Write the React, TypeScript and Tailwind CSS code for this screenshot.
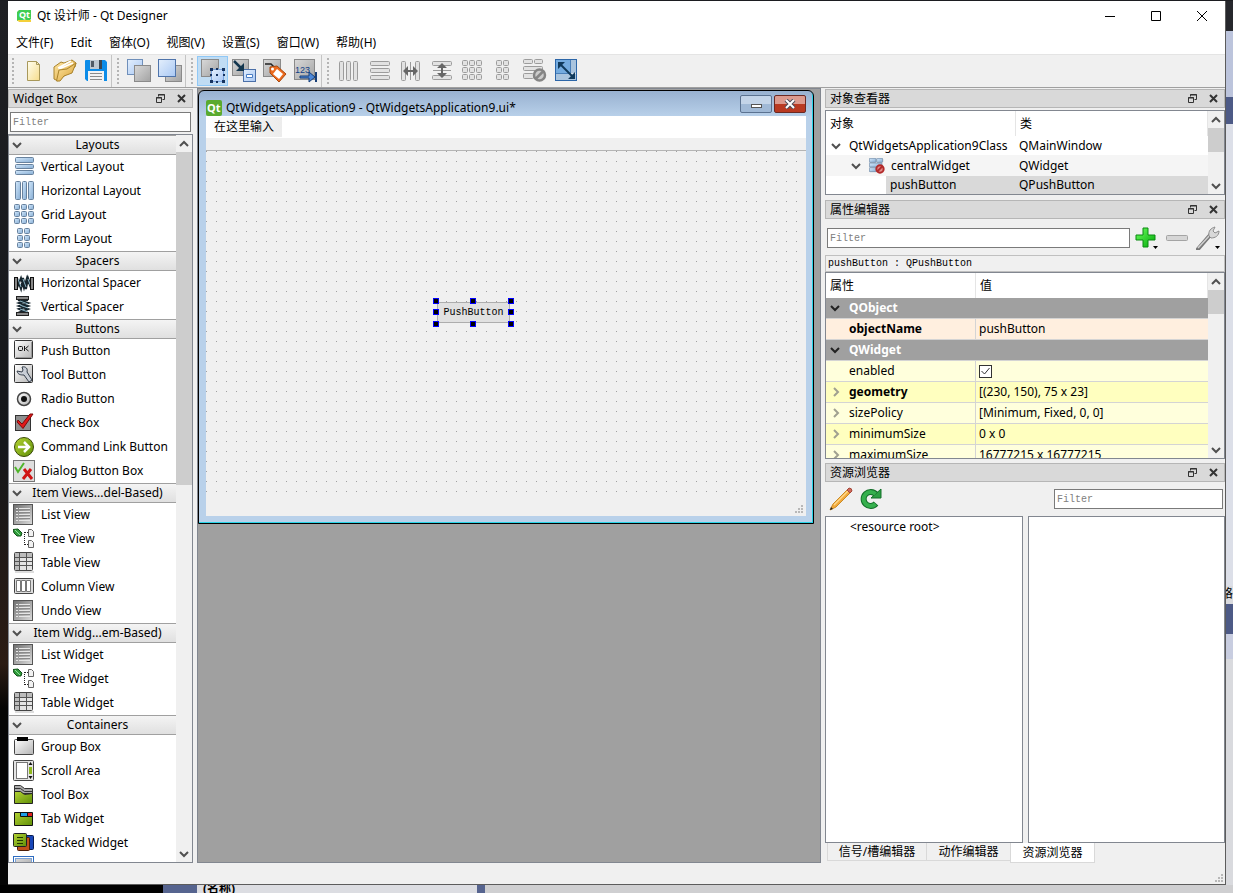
import { ReactNode } from "react";

const uiFont = "font-['Noto_Sans','Noto_Sans_CJK_SC',sans-serif]";
const monoFont = "font-['Liberation_Mono','Noto_Sans_CJK_SC',monospace]";

function Icon({ children, size = 24 }: { children: ReactNode; size?: number }) {
    return (
        <svg width={size} height={size} viewBox="0 0 24 24" fill="none" className="shrink-0" aria-hidden="true">
            {children}
        </svg>
    );
}

// Gradients shared by all the icons
function Gradients() {
    const ramps = [
        { id: "blue", from: "#d3e8fb", to: "#86add4" },
        { id: "sky", from: "#e4effc", to: "#a9c8f4" },
        { id: "gray", from: "#d9d9d9", to: "#a2a2a2" },
        { id: "light", from: "#ffffff", to: "#b4b4b4" },
        { id: "folder", from: "#ffe9a8", to: "#d9a032" },
        { id: "paper", from: "#fffef0", to: "#f6dd8c" },
        { id: "green", from: "#b5d334", to: "#5f8f08" },
        { id: "lime", from: "#6dff5f", to: "#00a808" },
        { id: "list", from: "#6e6e6e", to: "#dcdcdc" },
    ];
    return (
        <svg width="0" height="0" className="absolute" aria-hidden="true">
            <defs>
                {ramps.map((r) => (
                    <linearGradient key={r.id} id={r.id} x1="0" y1="0" x2="1" y2="1">
                        <stop offset="0" stopColor={r.from} />
                        <stop offset="1" stopColor={r.to} />
                    </linearGradient>
                ))}
            </defs>
        </svg>
    );
}

function Bars({ rects, fill, stroke }: { rects: number[][]; fill: string; stroke: string }) {
    return (
        <>
            {rects.map(([x, y, w, h]) => (
                <rect key={`${x}-${y}`} x={x + 0.5} y={y + 0.5} width={w - 1} height={h - 1} rx="1" fill={fill} stroke={stroke} />
            ))}
        </>
    );
}

const hRects = [[2, 2, 19, 6], [2, 9, 19, 5], [2, 15, 19, 5]];
const vRects = [[2, 2, 6, 19], [9, 2, 5, 19], [15, 2, 6, 19]];
const gridRects = [2, 9, 16].flatMap((y) => [1, 8, 15].map((x) => [x, y - 1, 6, 6]));
const formRects = [2, 9, 16].flatMap((y) => [4, 11].map((x) => [x, y - 1, 6, 6]));

const blue = { fill: "url(#blue)", stroke: "#68829e" };
const gray = { fill: "#e2e2e2", stroke: "#9c9c9c" };

const ListIcon = () => (
    <Icon>
        <rect x="0.5" y="1.5" width="19" height="20" fill="url(#list)" stroke="#555" />
        <path d="M3 5.5h2M3 8.5h2M3 11.5h2M3 14.5h2M3 17.5h2M6 5.5h11M6 8.5h11M6 11.5h11M6 14.5h11M6 17.5h11" stroke="#e6e6e6" />
        <path d="M6 6.5h11M6 9.5h11M6 12.5h11M6 15.5h11" stroke="#8b8b8b" />
    </Icon>
);

const TreeIcon = () => (
    <Icon>
        <path d="M0 2.5L5 2l4 4-1 3-4 0-3-3z" fill="#2f9b3a" stroke="#12501a" />
        <path d="M2 3l5 5" stroke="#8ee29a" />
        <path d="M11.5 5v14M12 5.5h4M12 17.5h4" stroke="#222" strokeDasharray="1 1" />
        <path d="M15.500 2.500h3l2 2v5h-5zM15.500 13.500h3l2 2v5h-5z" fill="#f2f2f2" stroke="#666" />
    </Icon>
);

const TableIcon = () => (
    <Icon>
        <rect x="1.5" y="1.5" width="18" height="18" rx="1" fill="#e4e4e4" stroke="#444" />
        <path d="M2 2h17v4H2zM2 2h4v17H2z" fill="#bcbcbc" />
        <path d="M2 6.5h17M2 10.5h17M2 14.5h17M6.5 2v17M13.5 2v17" stroke="#555" />
        <path d="M2 21h19" stroke="#bbb" />
    </Icon>
);

const TinyCaret = () => <path d="M19 20h5l-2.5 3z" fill="#000" />;

const sections: { title: string; items: [string, ReactNode][] }[] = [
    {
        title: "Layouts",
        items: [
            ["Vertical Layout", <Icon><Bars rects={hRects} {...blue} /></Icon>],
            ["Horizontal Layout", <Icon><Bars rects={vRects} {...blue} /></Icon>],
            ["Grid Layout", <Icon><Bars rects={gridRects} {...blue} /></Icon>],
            ["Form Layout", <Icon><Bars rects={formRects} {...blue} /></Icon>],
        ],
    },
    {
        title: "Spacers",
        items: [
            [
                "Horizontal Spacer",
                <Icon>
                    <path d="M4 7l4 11 2-11 3 11 2-11 4 11M4 17l4-10 3 10 3-10 4 10" stroke="#15252e" strokeWidth="2" />
                    <path d="M5 8l3 8M10 8l3 8M15 8l3 8" stroke="#8ab3c4" />
                    <rect x="1.5" y="6.5" width="3" height="12" fill="#888" stroke="#111" />
                    <rect x="17.5" y="6.5" width="3" height="12" fill="#888" stroke="#111" />
                </Icon>,
            ],
            [
                "Vertical Spacer",
                <Icon>
                    <path d="M5 5l10 3-9 3 9 3-10 4M15 5L6 8l9 3-9 3 9 4" stroke="#15252e" strokeWidth="2" />
                    <path d="M7 6l8 3M7 10l8 3M7 14l8 3" stroke="#8ab3c4" />
                    <rect x="3.5" y="1.5" width="12" height="3" fill="#888" stroke="#222" />
                    <rect x="3.5" y="17.5" width="12" height="3" fill="#888" stroke="#222" />
                </Icon>,
            ],
        ],
    },
    {
        title: "Buttons",
        items: [
            [
                "Push Button",
                <Icon>
                    <rect x="1.5" y="1.5" width="18" height="18" rx="1" fill="url(#light)" stroke="#333" />
                    <path d="M3 18.5h16M18.5 3v16" stroke="#999" />
                    <rect x="5.5" y="7.5" width="4" height="4" rx="1" stroke="#111" />
                    <path d="M11.500 7v5M15.500 7l-3 2.500 3 2.500" stroke="#111" />
                </Icon>,
            ],
            [
                "Tool Button",
                <Icon>
                    <rect x="1.5" y="1.5" width="18" height="18" rx="1" fill="url(#light)" stroke="#333" />
                    <path d="M9 4c4-1 6 2 5 5l5 8-3 2-5-7c-3 0-6 0-7-4l5 1 1-2z" fill="#c9ced6" stroke="#333d4a" />
                </Icon>,
            ],
            [
                "Radio Button",
                <Icon>
                    <circle cx="11" cy="12" r="6.5" fill="url(#light)" stroke="#444" strokeWidth="1.5" />
                    <circle cx="11" cy="12" r="3" fill="#111" />
                </Icon>,
            ],
            [
                "Check Box",
                <Icon>
                    <rect x="2.5" y="4.5" width="15" height="15" fill="#8f8f8f" stroke="#333" />
                    <path d="M5 9l4 4 8-10 3 0L10 17.5 4 11z" fill="#e01818" stroke="#7c0808" />
                </Icon>,
            ],
            [
                "Command Link Button",
                <Icon>
                    <circle cx="11" cy="12" r="9.5" fill="url(#green)" stroke="#3a4a08" />
                    <path d="M5 12h10M11 7l5 5-5 5" stroke="#fff" strokeWidth="2.5" />
                </Icon>,
            ],
            [
                "Dialog Button Box",
                <Icon>
                    <rect x="0.5" y="1.5" width="21" height="21" fill="#dedede" stroke="#777" />
                    <path d="M2 8l3 5 6-9" stroke="#4fb52a" strokeWidth="2" />
                    <path d="M11 10l8 10M18 10l-8 10" stroke="#d01414" strokeWidth="3" />
                </Icon>,
            ],
        ],
    },
    {
        title: "Item Views...del-Based)",
        items: [
            ["List View", <ListIcon />],
            ["Tree View", <TreeIcon />],
            ["Table View", <TableIcon />],
            [
                "Column View",
                <Icon>
                    <rect x="1.5" y="3.5" width="19" height="15" rx="1" fill="#ddd" stroke="#444" />
                    <path d="M3.500 5.500h4v11h-4zM8.500 5.500h4v11h-4zM13.500 5.500h4v11h-4z" fill="#fff" stroke="#777" />
                </Icon>,
            ],
            ["Undo View", <ListIcon />],
        ],
    },
    {
        title: "Item Widg...em-Based)",
        items: [
            ["List Widget", <ListIcon />],
            ["Tree Widget", <TreeIcon />],
            ["Table Widget", <TableIcon />],
        ],
    },
    {
        title: "Containers",
        items: [
            [
                "Group Box",
                <Icon>
                    <rect x="1.5" y="4.5" width="19" height="15" rx="1" fill="url(#light)" stroke="#444" />
                    <path d="M4 2h11v4H4z" fill="#000" />
                </Icon>,
            ],
            [
                "Scroll Area",
                <Icon>
                    <rect x="0.5" y="1.5" width="20" height="20" rx="1" fill="#e4e4e4" stroke="#444" />
                    <rect x="3.5" y="3.5" width="11" height="16" fill="#fff" stroke="#777" />
                    <path d="M16 8h3v7h-3z" fill="#8fb81c" />
                    <path d="M15.5 6l2-3 2 3zM15.5 17l2 3 2-3z" fill="#111" />
                </Icon>,
            ],
            [
                "Tool Box",
                <Icon>
                    <path d="M1.500 2.500h6l4 3h8v5h-18z" fill="#aaa" stroke="#333" />
                    <path d="M1.500 5.500h6l4 3h8" stroke="#333" />
                    <path d="M1.500 8.500h6l4 3 8-1v10h-18z" fill="url(#green)" stroke="#222" />
                </Icon>,
            ],
            [
                "Tab Widget",
                <Icon>
                    <path d="M1.500 5.500h18v13h-18z" fill="url(#green)" stroke="#111" />
                    <path d="M8 6h6v3H8z" fill="#1fa0e8" />
                    <path d="M15 6h4v3h-4z" fill="#e02020" />
                    <path d="M7.500 5v4.500H20M14.500 5v4" stroke="#111" />
                </Icon>,
            ],
            [
                "Stacked Widget",
                <Icon>
                    <rect x="8.5" y="4.5" width="12" height="14" rx="1" fill="#1746b8" stroke="#071b4f" />
                    <rect x="4.5" y="6.5" width="12" height="13" rx="1" fill="#c0501a" stroke="#4c1c05" />
                    <rect x="0.5" y="2.5" width="13" height="13" rx="1" fill="url(#green)" stroke="#222" />
                    <path d="M4 6.5h6M4 9.5h6M4 12.5h6" stroke="#233800" />
                </Icon>,
            ],
            [
                "Frame",
                <Icon>
                    <rect x="0.5" y="1.5" width="20" height="18" fill="#fff" stroke="#2e6cc0" />
                    <rect x="2.5" y="3.5" width="16" height="14" fill="url(#gray)" stroke="#7ba2d6" />
                </Icon>,
            ],
        ],
    },
];

const Tile = ({ x, y, s = 15, fill = "url(#gray)", stroke = "#8a8a8a" }: { x: number; y: number; s?: number; fill?: string; stroke?: string }) => (
    <rect x={x + 0.5} y={y + 0.5} width={s} height={s} fill={fill} stroke={stroke} />
);

const toolGroups: { label: string; icon: ReactNode; active?: boolean }[][] = [
    [
        {
            label: "New",
            icon: <Icon><path d="M5.500 2.500h9l3 3v16h-12z" fill="url(#paper)" stroke="#a8985a" /><path d="M14.500 2.500v3h3" stroke="#a8985a" /></Icon>,
        },
        {
            label: "Open",
            icon: (
                <Icon>
                    <path d="M1 8l7-5 3 1 8-3 4 3-1 4-17 14-4-2z" fill="url(#folder)" stroke="#a9832c" />
                    <path d="M5 9L18 2M6 10L20 4" stroke="#fff" strokeWidth="1.5" />
                    <path d="M3.500 22L6 11l8-1 9-6-4 10-8 3-4 5z" fill="url(#folder)" stroke="#a9832c" />
                </Icon>
            ),
        },
        {
            label: "Save",
            icon: (
                <Icon>
                    <path d="M1 2q0-1 1-1h19l2 2v19H3l-2-2z" fill="#0c8ce8" />
                    <rect x="6" y="1" width="12" height="9" fill="#3c4650" />
                    <rect x="6" y="1" width="9" height="9" fill="#bfc8d0" />
                    <path d="M7 2h3v6H7z" fill="#505a64" />
                    <rect x="4" y="12" width="16" height="10" fill="#f2f2f2" />
                    <path d="M6 14.5h12M6 17.5h12M6 20.5h12" stroke="#8a8a8a" />
                </Icon>
            ),
        },
    ],
    [
        { label: "Send to Back", icon: <Icon><Tile x={0} y={0} fill="url(#sky)" stroke="#6f8fba" /><Tile x={7} y={6} s={16} /></Icon> },
        { label: "Bring to Front", icon: <Icon><Tile x={7} y={6} s={16} /><Tile x={0} y={0} s={17} fill="url(#sky)" stroke="#4f74ab" /></Icon> },
    ],
    [
        {
            label: "Edit Widgets",
            active: true,
            icon: (
                <Icon>
                    <Tile x={0} y={0} s={17} />
                    <Tile x={10} y={10} s={12} fill="url(#sky)" stroke="#7ba5e0" />
                    <path d="M9 9h3v3H9zM15 9h2v2h-2zM21 9h3v3h-3zM9 15h2v2H9zM22 15h2v2h-2zM9 21h3v3H9zM15 22h2v2h-2zM21 21h3v3h-3zM15 15h2v2h-2z" fill="#16335f" />
                </Icon>
            ),
        },
        {
            label: "Edit Signals/Slots",
            icon: (
                <Icon>
                    <Tile x={0} y={0} s={16} />
                    <Tile x={11} y={10} s={12} fill="url(#sky)" stroke="#4a6fa8" />
                    <path d="M14.500 15.500h6v3h-6z" fill="#fff" stroke="#4a7dc4" />
                    <path d="M2 2l9 9" stroke="#14374f" strokeWidth="2.5" />
                    <path d="M12 4v8H4z" fill="#14374f" />
                </Icon>
            ),
        },
        {
            label: "Edit Buddies",
            icon: (
                <Icon>
                    <Tile x={0} y={0} s={17} />
                    <path d="M2 5h6l4 4" stroke="#222" strokeWidth="1.5" />
                    <path d="M7 8l7-1 9 8-7 8-9-9z" fill="#ec6a1e" stroke="#a8480e" />
                    <path d="M14 10l6 5-4 5-6-5z" fill="#fff" />
                    <circle cx="9.5" cy="10" r="1.5" fill="#fff" />
                </Icon>
            ),
        },
        {
            label: "Edit Tab Order",
            icon: (
                <Icon>
                    <Tile x={0} y={0} s={20} />
                    <text x="1" y="14" fontSize="9" fill="#123f86" fontFamily="Liberation Sans">123</text>
                    <path d="M6 17h9v-4l6 5-6 5v-4H6z" fill="#4d88d8" stroke="#173f78" />
                    <path d="M22 13v10" stroke="#173f78" strokeWidth="2" />
                </Icon>
            ),
        },
    ],
    [
        { label: "Lay Out Horizontally", icon: <Icon><Bars rects={[[2, 2, 5, 20], [9, 2, 5, 20], [16, 2, 5, 20]]} {...gray} /></Icon> },
        { label: "Lay Out Vertically", icon: <Icon><Bars rects={[[2, 2, 20, 5], [2, 9, 20, 5], [2, 16, 20, 5]]} {...gray} /></Icon> },
        {
            label: "Lay Out Horizontally in Splitter",
            icon: (
                <Icon>
                    <Bars rects={[[2, 2, 5, 20], [16, 2, 5, 20]]} {...gray} />
                    <path d="M11.5 3v18" stroke="#999" />
                    <path d="M4 12l5-5v4h5V7l5 5-5 5v-4H9v4z" fill="#666" />
                </Icon>
            ),
        },
        {
            label: "Lay Out Vertically in Splitter",
            icon: (
                <Icon>
                    <Bars rects={[[2, 2, 20, 5], [2, 16, 20, 5]]} {...gray} />
                    <path d="M3 11.5h18" stroke="#999" />
                    <path d="M12 4l5 5h-4v5h4l-5 5-5-5h4V9H7z" fill="#666" />
                </Icon>
            ),
        },
        { label: "Lay Out in a Grid", icon: <Icon><Bars rects={gridRects} {...gray} /></Icon> },
        { label: "Lay Out in a Form Layout", icon: <Icon><Bars rects={formRects} {...gray} /></Icon> },
        {
            label: "Break Layout",
            icon: (
                <Icon>
                    <Bars rects={[[0, 0, 10, 5], [11, 0, 9, 5], [0, 7, 20, 5], [0, 14, 11, 6]]} {...gray} />
                    <circle cx="16.5" cy="16" r="5.5" fill="#ccc" stroke="#858585" strokeWidth="2.5" />
                    <path d="M12.5 20l8-8" stroke="#858585" strokeWidth="2.5" />
                </Icon>
            ),
        },
        {
            label: "Adjust Size",
            icon: (
                <Icon>
                    <rect x="1.5" y="0.5" width="21" height="21" fill="#dbe6f1" stroke="#2c66a8" />
                    <path d="M2 1h14v13H2z" fill="#74abdf" />
                    <path d="M16.5 1v13M2 14.5h15" stroke="#4a7fb8" />
                    <path d="M17 1h5v13h-5zM2 15h20v6H2z" fill="#a9c4de" />
                    <path d="M7 6l11 11" stroke="#103a5c" strokeWidth="2" />
                    <path d="M4 3h7l-7 7zM21 20v-7l-7 7z" fill="#103a5c" />
                </Icon>
            ),
        },
    ],
];

function Chevron({ dir = "down", color = "#505050" }: { dir?: "down" | "up" | "right"; color?: string }) {
    const d = { down: "M1 3l4 4 4-4", up: "M1 7l4-4 4 4", right: "M3 1l4 4-4 4" }[dir];
    return (
        <svg width="10" height="10" viewBox="0 0 10 10" fill="none" className="shrink-0" aria-hidden="true">
            <path d={d} stroke={color} strokeWidth="2" />
        </svg>
    );
}

function ScrollBar({ thumb }: { thumb: string }) {
    return (
        <div className="flex w-4 shrink-0 flex-col items-center bg-[#f0f0f0]">
            <button aria-label="Scroll up" className="flex h-[17px] w-full items-center justify-center"><Chevron dir="up" /></button>
            <div className="min-h-0 w-full flex-1">
                <div className={`w-full bg-[#cdcdcd] ${thumb}`} />
            </div>
            <button aria-label="Scroll down" className="flex h-[17px] w-full items-center justify-center"><Chevron /></button>
        </div>
    );
}

function DockTitle({ title }: { title: string }) {
    return (
        <div className="flex h-[19px] shrink-0 items-center border border-[#b6b6b6] bg-[#d9d9d9] pl-1">
            <h2 className="flex-1 leading-4">{title}</h2>
            <button aria-label={`Float ${title}`} className="flex h-4 w-5 items-center justify-center">
                <svg width="9" height="9" viewBox="0 0 9 9" fill="none" stroke="#333">
                    <path d="M2.500 2.500v-2h6v5h-2" />
                    <path d="M0.500 3.500h5v5h-5zM0 4h6M2 1h7" />
                </svg>
            </button>
            <button aria-label={`Close ${title}`} className="flex h-4 w-[22px] items-center justify-center">
                <svg width="9" height="9" viewBox="0 0 9 9" fill="none" stroke="#333" strokeWidth="2">
                    <path d="M1 1l7 7M8 1L1 8" />
                </svg>
            </button>
        </div>
    );
}

function FilterInput({ label, className }: { label: string; className: string }) {
    return (
        <input
            type="text"
            aria-label={label}
            placeholder="Filter"
            className={`h-5 border border-[#7a7a7a] bg-white px-0.5 text-[10px] outline-none placeholder:text-[#808080] ${monoFont} ${className}`}
        />
    );
}

function SizeGrip() {
    return (
        <svg width="8" height="8" viewBox="0 0 8 8" fill="#b8b8b8" aria-hidden="true">
            <path d="M6 0h2v2H6zM3 3h2v2H3zM6 3h2v2H6zM0 6h2v2H0zM3 6h2v2H3zM6 6h2v2H6z" />
        </svg>
    );
}

function TitleBar() {
    return (
        <header className="flex h-[30px] shrink-0 items-center bg-white pl-2">
            <svg width="16" height="14" viewBox="0 0 16 14" aria-hidden="true">
                <path d="M3 1h12v9l-2 2H1V3z" fill="#41cd52" />
                <path d="M1 11h14v2H3z" fill="#f4d03a" />
                <text x="3" y="9" fontSize="9" fontWeight="700" fill="#fff" fontFamily="Noto Sans">Qt</text>
            </svg>
            <h1 className="flex-1 pl-[5px]">Qt 设计师 - Qt Designer</h1>
            {[
                ["Minimize", "M0 5.5h10"],
                ["Maximize", "M0.5 0.5h9v9h-9z"],
                ["Close", "M0 0l10 10M10 0L0 10"],
            ].map(([label, d]) => (
                <button key={label} aria-label={label} className="flex h-full w-[46px] items-center justify-center">
                    <svg width="10" height="10" viewBox="0 0 10 10" fill="none" stroke="#000"><path d={d} /></svg>
                </button>
            ))}
        </header>
    );
}

function MenuBar() {
    const menus = ["文件(F)", "Edit", "窗体(O)", "视图(V)", "设置(S)", "窗口(W)", "帮助(H)"];
    return (
        <nav className="flex h-[23px] shrink-0 items-center gap-px bg-white">
            {menus.map((m) => (
                <button key={m} className="px-2 leading-5">{m}</button>
            ))}
        </nav>
    );
}

function ToolBar() {
    return (
        <div role="toolbar" className="flex h-[34px] shrink-0 border-t border-b border-t-[#e4e4e4] border-b-[#a0a0a0] bg-[#f0f0f0]">
            {toolGroups.map((group, i) => (
                <div key={i} className={`flex items-center ${i < toolGroups.length - 1 ? "border-r border-[#c4c4c4]" : ""}`}>
                    <div className={`flex justify-center ${i === 0 ? "w-[10px]" : "w-[11px]"}`}>
                        <div className="h-[26px] w-0.5 bg-[linear-gradient(#b4b4b4_50%,transparent_50%)] bg-[length:2px_4px]" />
                    </div>
                    {group.map((tool) => (
                        <button
                            key={tool.label}
                            aria-label={tool.label}
                            className={`flex h-[30px] w-[31px] items-center justify-center border ${tool.active ? "border-[#90c8f6] bg-[#c0dcf3]" : "border-transparent"}`}
                        >
                            {tool.icon}
                        </button>
                    ))}
                </div>
            ))}
        </div>
    );
}

function WidgetBox() {
    return (
        <aside className="flex w-[185px] shrink-0 flex-col pt-px">
            <DockTitle title="Widget Box" />
            <FilterInput label="Filter widgets" className="mx-0.5 mt-1" />
            <div className="mt-0.5 flex min-h-0 flex-1 border border-[#828790] bg-white">
                <div className="min-h-0 flex-1 overflow-hidden">
                    {sections.map((section) => (
                        <section key={section.title}>
                            <button className="flex h-5 w-full items-center border-t border-b border-[#a0a0a0] bg-linear-to-b from-[#f4f4f4] to-[#e0e0e0] px-[3px]">
                                <Chevron />
                                <span className="flex-1 text-center whitespace-nowrap">{section.title}</span>
                            </button>
                            <ul>
                                {section.items.map(([name, icon]) => (
                                    <li key={name} className="flex h-6 items-center gap-1 pl-1 whitespace-nowrap">
                                        {icon}
                                        {name}
                                    </li>
                                ))}
                            </ul>
                        </section>
                    ))}
                </div>
                <ScrollBar thumb="h-[48%]" />
            </div>
        </aside>
    );
}

const handles = [
    "-left-[3px] -top-[3px]",
    "left-[34px] -top-[3px]",
    "left-[72px] -top-[3px]",
    "-left-[3px] top-[8px]",
    "left-[72px] top-[8px]",
    "-left-[3px] top-[20px]",
    "left-[34px] top-[20px]",
    "left-[72px] top-[20px]",
];

function FormWindow() {
    return (
        <div className="absolute top-px left-0 flex h-[434px] w-[616px] flex-col rounded-t-md border border-black bg-[#b9d1ea] bg-[linear-gradient(#98b1d0,#b9d1ea_26px)] pr-[7px] pb-[7px] pl-[7px] shadow-[inset_-1px_-1px_0_#28d4e8]">
            <div className="flex h-[25px] shrink-0 items-end gap-1">
                <svg width="16" height="16" viewBox="0 0 16 16" aria-hidden="true">
                    <rect width="16" height="16" rx="2" fill="#5aaa2e" />
                    <text x="1" y="12" fontSize="11" fontWeight="700" fill="#fff" fontFamily="Noto Sans">Qt</text>
                </svg>
                <span className="flex-1 leading-4">QtWidgetsApplication9 - QtWidgetsApplication9.ui*</span>
                <div className="flex gap-0.5 self-start pt-1">
                    <button aria-label="Minimize form" className="flex h-[18px] w-8 items-center justify-center rounded-xs border border-[#5b7290] bg-linear-to-b from-[#c3d4e8] from-50% to-[#a0b9d6] to-50%">
                        <span className="mt-1 h-1 w-[11px] border border-[#555] bg-white" />
                    </button>
                    <button aria-label="Close form" className="flex h-[18px] w-8 items-center justify-center rounded-xs border border-[#6b2a24] bg-linear-to-b from-[#dc9a8e] from-50% to-[#b93a22] to-50%">
                        <svg width="12" height="10" viewBox="0 0 12 10" fill="none">
                            <path d="M2 1l8 8M10 1L2 9" stroke="#4d4d5a" strokeWidth="4" />
                            <path d="M2 1l8 8M10 1L2 9" stroke="#fff" strokeWidth="2" />
                        </svg>
                    </button>
                </div>
            </div>
            <div className="flex min-h-0 flex-1 flex-col bg-[#f0f0f0]">
                <div className="flex h-[22px] shrink-0 items-center bg-white">
                    <button className="h-5 bg-linear-to-r from-white to-[#ececec] px-2 leading-5">在这里输入</button>
                </div>
                <div className="h-[13px] shrink-0 border-b border-[#b4b4b4]" />
                <div className="relative mr-[9px] h-[344px] shrink-0 bg-[conic-gradient(from_270deg_at_1px_1px,#a0a0a0_90deg,transparent_90deg)] bg-[length:10px_10px]">
                    <div className="absolute top-[150px] left-[230px]">
                        <button className={`m-px h-[21px] w-[73px] border border-[#adadad] bg-[#e1e1e1] text-[10px] ${monoFont}`}>PushButton</button>
                        {handles.map((pos) => (
                            <span key={pos} className={`absolute size-1.5 border border-[#0000ff] bg-black ${pos}`} />
                        ))}
                    </div>
                </div>
                <div className="flex flex-1 items-end justify-end p-[3px]"><SizeGrip /></div>
            </div>
        </div>
    );
}

function ObjectInspector() {
    return (
        <section className="flex flex-col">
            <DockTitle title="对象查看器" />
            <div className="mt-0.5 flex h-[85px] border border-[#828790] bg-white">
                <div className="min-w-0 flex-1 overflow-hidden">
                    <table className="w-full table-fixed border-separate border-spacing-0 text-left whitespace-nowrap">
                        <colgroup><col className="w-[190px]" /><col /></colgroup>
                        <thead>
                            <tr className="h-[25px]">
                                <th className="border-r border-[#e5e5e5] p-0 pl-1 font-normal">对象</th>
                                <th className="border-r border-[#e5e5e5] p-0 pl-1 font-normal">类</th>
                            </tr>
                        </thead>
                        <tbody>
                            <tr className="h-[19px] leading-4">
                                <td className="p-0"><div className="flex items-center gap-2 pl-[5px]"><Chevron />QtWidgetsApplication9Class</div></td>
                                <td className="p-0 pl-[3px]">QMainWindow</td>
                            </tr>
                            <tr className="h-[21px] bg-[#f5f5f5] leading-4">
                                <td className="p-0">
                                    <div className="flex items-center gap-2 pl-[25px]">
                                        <Chevron />
                                        <div className="flex items-center gap-1.5">
                                            <Icon size={16}>
                                                <Bars rects={[[0, 0, 11, 7], [11, 0, 10, 7], [0, 7, 20, 7], [0, 14, 12, 7]]} {...blue} />
                                                <circle cx="16.5" cy="16.5" r="5.5" fill="#e28a8a" stroke="#b32a2a" strokeWidth="3" />
                                                <path d="M12.5 20l8-8" stroke="#b32a2a" strokeWidth="3" />
                                            </Icon>
                                            centralWidget
                                        </div>
                                    </div>
                                </td>
                                <td className="p-0 pl-[3px]">QWidget</td>
                            </tr>
                            <tr className="h-[18px] leading-[18px]">
                                <td className="p-0 pl-[60px]"><div className="bg-[#d9d9d9] pl-1">pushButton</div></td>
                                <td className="bg-[#d9d9d9] p-0 pl-[3px]">QPushButton</td>
                            </tr>
                        </tbody>
                    </table>
                </div>
                <ScrollBar thumb="h-6" />
            </div>
        </section>
    );
}

const properties: { name: string; value: string; bg: string; bold?: boolean }[] = [
    { name: "geometry", value: "[(230, 150), 75 x 23]", bg: "bg-[#ffffbf]", bold: true },
    { name: "sizePolicy", value: "[Minimum, Fixed, 0, 0]", bg: "bg-[#ffffdc]" },
    { name: "minimumSize", value: "0 x 0", bg: "bg-[#ffffbf]" },
    { name: "maximumSize", value: "16777215 x 16777215", bg: "bg-[#ffffdc]" },
];

function GroupRow({ name }: { name: string }) {
    return (
        <tr className="h-[21px] bg-[#a0a0a0] font-bold text-white">
            <td colSpan={2} className="border-b border-[#d4d4d4] p-0">
                <div className="flex items-center gap-2 pl-1"><Chevron color="#222" /><span className="pl-px">{name}</span></div>
            </td>
        </tr>
    );
}

function PropertyEditor() {
    const cell = "border-b border-[#d4d4d4] p-0";
    return (
        <section className="mt-[5px] flex flex-col">
            <DockTitle title="属性编辑器" />
            <div className="flex h-9 items-center px-0.5 pt-0.5">
                <FilterInput label="Filter properties" className="min-w-0 flex-1" />
                <button aria-label="Add property" className="flex w-[31px] justify-center">
                    <Icon>
                        <path d="M9 2h5v7h7v5h-7v7H9v-7H2V9h7z" fill="url(#lime)" stroke="#0a8a12" />
                        <TinyCaret />
                    </Icon>
                </button>
                <button aria-label="Remove property" className="flex w-[31px] justify-center">
                    <Icon><rect x="1.5" y="9.5" width="21" height="5" rx="1" fill="#d6d6d6" stroke="#a4a4a4" /></Icon>
                </button>
                <button aria-label="Configure" className="flex w-[31px] justify-center">
                    <Icon>
                        <path d="M2 23L15 8" stroke="#777" strokeWidth="4" strokeLinecap="round" />
                        <path d="M2 22L14 9" stroke="#cfcfcf" strokeWidth="1.5" />
                        <path d="M13 10c-1-5 2-8 6-9l-2 4 2 2 4-2c0 5-4 7-8 7z" fill="#d8d8d8" stroke="#8c8c8c" />
                        <TinyCaret />
                    </Icon>
                </button>
            </div>
            <div className={`h-[17px] border border-[#c0c0c0] px-0.5 text-[10px] leading-4 whitespace-pre ${monoFont}`}>pushButton : QPushButton</div>
            <div className="flex h-[187px] border border-[#828790] bg-white">
                <div className="min-w-0 flex-1 overflow-hidden">
                    <table className="w-full table-fixed border-separate border-spacing-0 text-left leading-4 whitespace-nowrap">
                        <colgroup><col className="w-[150px]" /><col /></colgroup>
                        <thead>
                            <tr className="h-[25px]">
                                <th className="border-r border-[#e5e5e5] p-0 pl-1 font-normal">属性</th>
                                <th className="border-r border-[#e5e5e5] p-0 pl-1 font-normal">值</th>
                            </tr>
                        </thead>
                        <tbody>
                            <GroupRow name="QObject" />
                            <tr className="h-[21px] bg-[#ffefdf]">
                                <td className={`${cell} border-r pl-[23px] font-bold`}>objectName</td>
                                <td className={`${cell} pl-[3px]`}>pushButton</td>
                            </tr>
                            <GroupRow name="QWidget" />
                            <tr className="h-[21px] bg-[#ffffdc]">
                                <td className={`${cell} border-r pl-[23px]`}><label htmlFor="enabled">enabled</label></td>
                                <td className={`${cell} pl-[3px]`}>
                                    <div className="relative flex items-center">
                                        <input id="enabled" type="checkbox" defaultChecked className="size-[13px] appearance-none border border-[#333] bg-white" />
                                        <svg width="13" height="13" viewBox="0 0 13 13" fill="none" className="pointer-events-none absolute left-0">
                                            <path d="M2.5 6l3 3 5-6" stroke="#333" />
                                        </svg>
                                    </div>
                                </td>
                            </tr>
                            {properties.map((p) => (
                                <tr key={p.name} className={`h-[21px] ${p.bg} ${p.bold ? "font-bold" : ""}`}>
                                    <td className={`${cell} border-r`}>
                                        <div className="flex items-center gap-2 pl-[5px]"><Chevron dir="right" color="#a0a090" />{p.name}</div>
                                    </td>
                                    <td className={`${cell} pl-[3px] font-normal`}>{p.value}</td>
                                </tr>
                            ))}
                        </tbody>
                    </table>
                </div>
                <ScrollBar thumb="h-6" />
            </div>
        </section>
    );
}

function ResourceBrowser() {
    return (
        <section className="mt-1 flex min-h-0 flex-1 flex-col">
            <DockTitle title="资源浏览器" />
            <div className="flex h-[34px] shrink-0 items-center gap-1.5 px-1">
                <button aria-label="Edit resources">
                    <Icon>
                        <path d="M1 23l3-6L18 3l3 3L7 20z" fill="#f2a93b" stroke="#c98a26" />
                        <path d="M5 18L19 4" stroke="#ffd98a" strokeWidth="1.5" />
                        <path d="M18 3l2-2q3 0 3 3l-2 2z" fill="#d06a5a" stroke="#a4483a" />
                        <path d="M1 23l1-3 2 2z" fill="#222" />
                    </Icon>
                </button>
                <button aria-label="Reload">
                    <Icon>
                        <path d="M17 16.5a7 7 0 1 1 0-9" stroke="#14702a" strokeWidth="6" />
                        <path d="M12 11h10V2z" fill="#2da043" stroke="#14702a" />
                        <path d="M16.5 17a7 7 0 1 1 0-10" stroke="#36b04e" strokeWidth="4" />
                    </Icon>
                </button>
                <div className="flex flex-1 justify-end">
                    <FilterInput label="Filter resources" className="-mr-0.5 w-[169px]" />
                </div>
            </div>
            <div className="grid min-h-0 flex-1 grid-cols-2 gap-[5px]">
                <div className="border border-[#828790] bg-white pl-6 leading-5">&lt;resource root&gt;</div>
                <div className="border border-[#828790] bg-white" />
            </div>
            <div role="tablist" className="flex h-5 shrink-0 items-start pl-0.5 leading-4">
                <button role="tab" aria-selected="false" className="h-[18px] w-[100px] border border-t-0 border-[#d9d9d9]">信号/槽编辑器</button>
                <button role="tab" aria-selected="false" className="h-[18px] w-[83px] border-b border-[#d9d9d9]">动作编辑器</button>
                <button role="tab" aria-selected="true" className="h-5 w-[85px] border border-t-0 border-[#d9d9d9] bg-white">资源浏览器</button>
            </div>
        </section>
    );
}

export default function App() {
    return (
        <div className={`flex h-screen flex-col overflow-hidden bg-[#1c1d21] text-xs text-black ${uiFont}`}>
            <Gradients />
            <div className="flex min-h-0 flex-1 pt-px">
                <div className="w-2 shrink-0 bg-[linear-gradient(#1f2024,#15171b_50%,#2c1c14_75%,#050505_80%)]" />
                <main className="flex min-w-0 flex-1 flex-col border-r border-b border-[#5c5c5c] bg-[#f0f0f0]">
                    <TitleBar />
                    <MenuBar />
                    <ToolBar />
                    <div className="flex min-h-0 flex-1">
                        <WidgetBox />
                        <div className="relative ml-1 min-w-0 flex-1 overflow-hidden border border-[#828790] bg-[#a0a0a0]">
                            <FormWindow />
                        </div>
                        <div className="ml-1 flex w-[400px] shrink-0 flex-col pt-px">
                            <ObjectInspector />
                            <PropertyEditor />
                            <ResourceBrowser />
                        </div>
                    </div>
                    <footer className="flex h-[21px] shrink-0 items-end justify-end p-0.5"><SizeGrip /></footer>
                </main>
                <div className="flex w-[7px] shrink-0 flex-col bg-[#d9dade]">
                    <div className="h-[30px] bg-[#26272c]" />
                    <div className="h-[66px] bg-[#bcc4dc]" />
                    <div className="h-[27px] bg-[#4d5a86]" />
                    <div className="h-[462px] bg-[#dcdfe8]" />
                    <div className="flex h-[18px] justify-end overflow-hidden">格</div>
                    <div className="h-[30px] bg-[#4d5a86]" />
                    <div className="h-[25px] bg-[#c8cde0]" />
                </div>
            </div>
            <div className="flex h-2 shrink-0 overflow-hidden bg-[#cfcfd1]">
                <div className="w-[163px] bg-black" />
                <div className="w-[34px] bg-[#56648f]" />
                <div className="flex w-[280px] items-center bg-[#dcdde2] pl-1.5 font-bold">(名称)</div>
                <div className="w-2 bg-[#56648f]" />
            </div>
        </div>
    );
}
